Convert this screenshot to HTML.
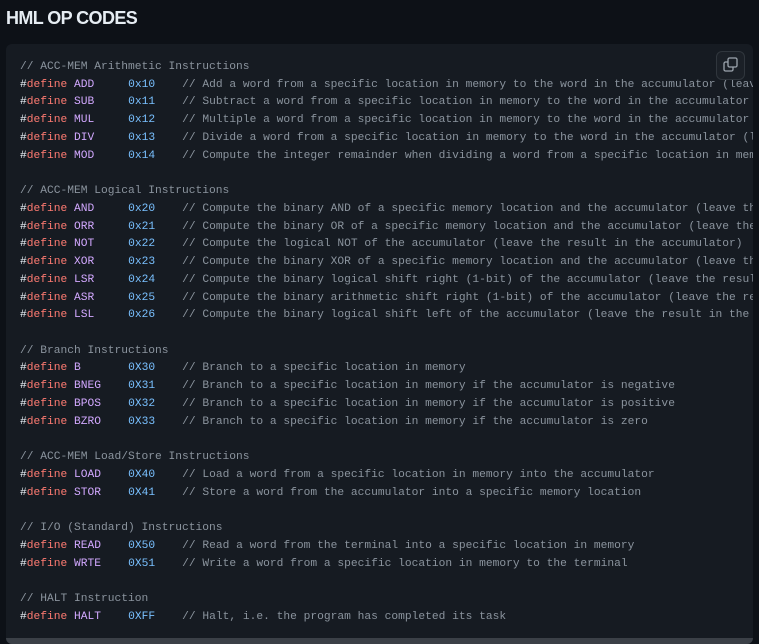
<!DOCTYPE html>
<html><head><style>
html,body{margin:0;padding:0;background:#0d1117;width:759px;height:642px;overflow:hidden}
h1{position:absolute;left:6px;top:8px;margin:0;font:bold 18px "Liberation Sans",sans-serif;color:#e6edf3;letter-spacing:-0.6px}
.box{position:absolute;left:6px;top:44px;width:747px;height:600px;background:#161b22;border-radius:6px;overflow:hidden}
pre{position:absolute;left:14px;top:15px;margin:0;font:11.25px/17.74px "Liberation Mono",monospace;color:#e6edf3;white-space:pre}
.c{color:#8b949e}.k{color:#ff7b72}.n{color:#d2a8ff}.h{color:#79c0ff}
.copy{position:absolute;left:710px;top:7px;width:29px;height:29px;border:1px solid #30363d;border-radius:6px;background:#1b2027;box-sizing:border-box}
.sb{position:absolute;left:0;top:594px;width:747px;height:6px;background:#3b4047}
</style></head><body>
<h1>HML OP CODES</h1>
<div class="box">
<pre><span class="c">// ACC-MEM Arithmetic Instructions</span>
#<span class="k">define</span> <span class="n">ADD</span>     <span class="h">0x10</span>    <span class="c">// Add a word from a specific location in memory to the word in the accumulator (leave the result in the accumulator)</span>
#<span class="k">define</span> <span class="n">SUB</span>     <span class="h">0x11</span>    <span class="c">// Subtract a word from a specific location in memory to the word in the accumulator (leave</span>
#<span class="k">define</span> <span class="n">MUL</span>     <span class="h">0x12</span>    <span class="c">// Multiple a word from a specific location in memory to the word in the accumulator (leave</span>
#<span class="k">define</span> <span class="n">DIV</span>     <span class="h">0x13</span>    <span class="c">// Divide a word from a specific location in memory to the word in the accumulator (leave</span>
#<span class="k">define</span> <span class="n">MOD</span>     <span class="h">0x14</span>    <span class="c">// Compute the integer remainder when dividing a word from a specific location in memory</span>

<span class="c">// ACC-MEM Logical Instructions</span>
#<span class="k">define</span> <span class="n">AND</span>     <span class="h">0x20</span>    <span class="c">// Compute the binary AND of a specific memory location and the accumulator (leave the result</span>
#<span class="k">define</span> <span class="n">ORR</span>     <span class="h">0x21</span>    <span class="c">// Compute the binary OR of a specific memory location and the accumulator (leave the result</span>
#<span class="k">define</span> <span class="n">NOT</span>     <span class="h">0x22</span>    <span class="c">// Compute the logical NOT of the accumulator (leave the result in the accumulator)</span>
#<span class="k">define</span> <span class="n">XOR</span>     <span class="h">0x23</span>    <span class="c">// Compute the binary XOR of a specific memory location and the accumulator (leave the result</span>
#<span class="k">define</span> <span class="n">LSR</span>     <span class="h">0x24</span>    <span class="c">// Compute the binary logical shift right (1-bit) of the accumulator (leave the result in</span>
#<span class="k">define</span> <span class="n">ASR</span>     <span class="h">0x25</span>    <span class="c">// Compute the binary arithmetic shift right (1-bit) of the accumulator (leave the result</span>
#<span class="k">define</span> <span class="n">LSL</span>     <span class="h">0x26</span>    <span class="c">// Compute the binary logical shift left of the accumulator (leave the result in the accumulator)</span>

<span class="c">// Branch Instructions</span>
#<span class="k">define</span> <span class="n">B</span>       <span class="h">0X30</span>    <span class="c">// Branch to a specific location in memory</span>
#<span class="k">define</span> <span class="n">BNEG</span>    <span class="h">0X31</span>    <span class="c">// Branch to a specific location in memory if the accumulator is negative</span>
#<span class="k">define</span> <span class="n">BPOS</span>    <span class="h">0X32</span>    <span class="c">// Branch to a specific location in memory if the accumulator is positive</span>
#<span class="k">define</span> <span class="n">BZRO</span>    <span class="h">0X33</span>    <span class="c">// Branch to a specific location in memory if the accumulator is zero</span>

<span class="c">// ACC-MEM Load/Store Instructions</span>
#<span class="k">define</span> <span class="n">LOAD</span>    <span class="h">0X40</span>    <span class="c">// Load a word from a specific location in memory into the accumulator</span>
#<span class="k">define</span> <span class="n">STOR</span>    <span class="h">0X41</span>    <span class="c">// Store a word from the accumulator into a specific memory location</span>

<span class="c">// I/O (Standard) Instructions</span>
#<span class="k">define</span> <span class="n">READ</span>    <span class="h">0X50</span>    <span class="c">// Read a word from the terminal into a specific location in memory</span>
#<span class="k">define</span> <span class="n">WRTE</span>    <span class="h">0X51</span>    <span class="c">// Write a word from a specific location in memory to the terminal</span>

<span class="c">// HALT Instruction</span>
#<span class="k">define</span> <span class="n">HALT</span>    <span class="h">0XFF</span>    <span class="c">// Halt, i.e. the program has completed its task</span></pre>
<div class="copy"><svg width="27" height="27" viewBox="0 0 27 27"><rect x="7" y="10" width="9" height="9" rx="1.5" fill="none" stroke="#9da5ae" stroke-width="1.3"/><rect x="11" y="6" width="9" height="9" rx="1.5" fill="#1b2027" stroke="#9da5ae" stroke-width="1.3"/></svg></div>
<div class="sb"></div>
</div>
</body></html>
